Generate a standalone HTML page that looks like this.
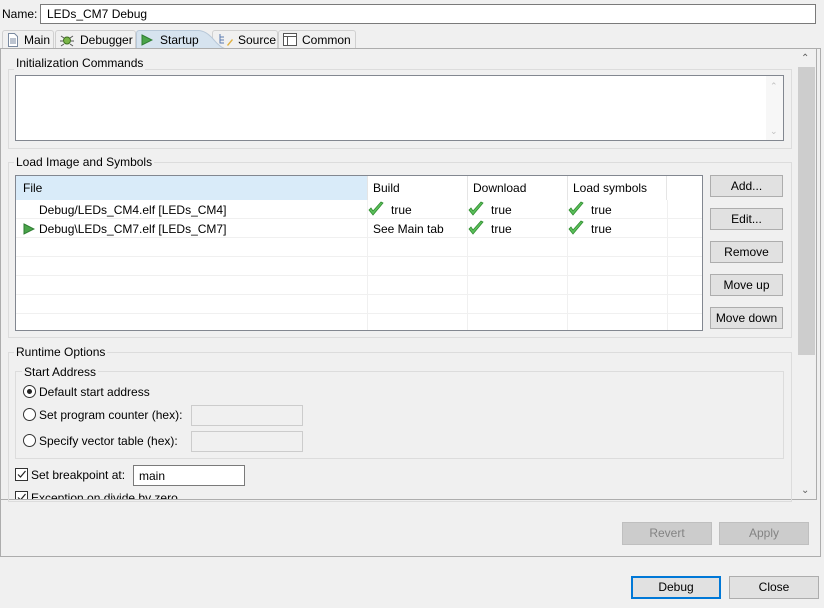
<!DOCTYPE html>
<html><head><style>
*{box-sizing:border-box;margin:0;padding:0}
body{width:824px;height:608px;background:#f0f0f0;font-family:"Liberation Sans",sans-serif;font-size:12px;color:#000;position:relative;overflow:hidden}
.a{position:absolute}
.t{position:absolute;white-space:nowrap;line-height:14px}
.grp{position:absolute;border:1px solid #dcdcdc}
.lbl{position:absolute;background:#f0f0f0;padding:0 2px;line-height:14px;white-space:nowrap}
.btn{position:absolute;background:#e1e1e1;border:1px solid #adadad;text-align:center;line-height:20px;height:22px}
.in{position:absolute;background:#fff;border:1px solid #7a7a7a}
.dis{position:absolute;background:#f0f0f0;border:1px solid #ccc}
.radio{position:absolute;width:13px;height:13px;border:1px solid #333;border-radius:50%;background:#fff}
.cb{position:absolute;width:13px;height:13px;border:1px solid #333;background:#fff}
.hl{position:absolute;height:1px;background:#f0f0f0}
.vl{position:absolute;width:1px;background:#f0f0f0}
</style></head><body>
<div class="t" style="left:2px;top:7px">Name:</div>
<div class="in" style="left:40px;top:4px;width:776px;height:20px"></div>
<div class="t" style="left:47px;top:7px">LEDs_CM7 Debug</div>

<!-- tabs -->
<div class="a" style="left:2px;top:30px;width:52px;height:19px;border:1px solid #d0d0d0;border-bottom:none;border-radius:3px 3px 0 0"></div>
<div class="a" style="left:55px;top:30px;width:81px;height:19px;border:1px solid #d0d0d0;border-bottom:none;border-radius:3px 3px 0 0"></div>
<div class="a" style="left:212px;top:30px;width:66px;height:19px;border:1px solid #d0d0d0;border-bottom:none;border-radius:3px 3px 0 0"></div>
<div class="a" style="left:278px;top:30px;width:78px;height:19px;border:1px solid #d0d0d0;border-bottom:none;border-radius:3px 3px 0 0"></div>
<svg class="a" style="left:136px;top:30px" width="92" height="19"><path d="M0.5 19V3.5Q0.5 0.5 3.5 0.5H62Q70 0.5 78 10T92 19Z" fill="#d6e3ef" stroke="#b8c8d8"/></svg>
<svg class="a" style="left:7px;top:33px" width="12" height="14"><path d="M1.5 .5h6l3 3v10h-9z" fill="#fff" stroke="#7a8aa0"/><path d="M3 6h6M3 8h6M3 10h6" stroke="#7a8aa0"/></svg>
<div class="t" style="left:24px;top:33px">Main</div>
<svg class="a" style="left:60px;top:33px" width="14" height="14"><circle cx="7" cy="7.5" r="3.5" fill="#7ab648" stroke="#3d6e20"/><path d="M1 3l3 2M13 3l-3 2M0 8h3M11 8h3M1 13l3-2M13 13l-3-2" stroke="#555"/></svg>
<div class="t" style="left:80px;top:33px">Debugger</div>
<svg class="a" style="left:141px;top:34px" width="12" height="12"><path d="M1 1l10 5-10 5z" fill="#4aa44a" stroke="#2e7d32"/></svg>
<div class="t" style="left:160px;top:33px">Startup</div>
<svg class="a" style="left:218px;top:33px" width="16" height="14"><path d="M2 1v9h4M2 4h4M2 7h4" stroke="#5a7ab0" fill="none"/><path d="M9 12l5-6 1 1-5 6z" fill="#e0b040"/></svg>
<div class="t" style="left:238px;top:33px">Source</div>
<svg class="a" style="left:283px;top:33px" width="14" height="13"><rect x=".5" y=".5" width="13" height="12" fill="#fff" stroke="#555"/><path d="M.5 3.5h13M4.5 3.5v9" stroke="#555"/></svg>
<div class="t" style="left:302px;top:33px">Common</div>

<!-- tab panel -->
<div class="a" style="left:0px;top:48px;width:821px;height:509px;border:1px solid #adadad"></div>
<div class="a" style="left:1px;top:49px;width:816px;height:451px;border-bottom:1px solid #adadad;border-right:1px solid #adadad"></div>
<div class="a" style="left:797px;top:50px;width:18px;height:449px;background:#f0f0f0"></div>
<div class="a" style="left:798px;top:67px;width:17px;height:288px;background:#cdcdcd"></div>
<div class="t" style="left:801px;top:52px;font-size:10px;color:#606060">&#8963;</div>
<div class="t" style="left:801px;top:484px;font-size:10px;color:#606060">&#8964;</div>

<!-- Init commands -->
<div class="grp" style="left:8px;top:69px;width:784px;height:80px"></div>
<div class="lbl" style="left:14px;top:56px">Initialization Commands</div>
<div class="in" style="left:15px;top:75px;width:769px;height:66px;border-color:#828790"></div>
<div class="a" style="left:766px;top:76px;width:17px;height:64px;background:#f7f7f7"></div>
<div class="t" style="left:770px;top:79px;font-size:9px;color:#c0c0c0">&#8963;</div>
<div class="t" style="left:770px;top:124px;font-size:9px;color:#c0c0c0">&#8964;</div>

<!-- Load Image -->
<div class="grp" style="left:8px;top:162px;width:784px;height:176px"></div>
<div class="lbl" style="left:14px;top:155px">Load Image and Symbols</div>
<div class="in" style="left:15px;top:175px;width:688px;height:156px;border-color:#828790"></div>
<div class="a" style="left:16px;top:176px;width:351px;height:24px;background:#d9ebf9"></div>
<div class="a" style="left:367px;top:176px;width:1px;height:24px;background:#e5e5e5"></div>
<div class="a" style="left:467px;top:176px;width:1px;height:24px;background:#e5e5e5"></div>
<div class="a" style="left:567px;top:176px;width:1px;height:24px;background:#e5e5e5"></div>
<div class="a" style="left:666px;top:176px;width:1px;height:24px;background:#e5e5e5"></div>
<div class="vl" style="left:367px;top:200px;height:130px"></div>
<div class="vl" style="left:467px;top:200px;height:130px"></div>
<div class="vl" style="left:567px;top:200px;height:130px"></div>
<div class="vl" style="left:667px;top:200px;height:130px"></div>
<div class="hl" style="left:16px;top:218px;width:686px"></div>
<div class="hl" style="left:16px;top:237px;width:686px"></div>
<div class="hl" style="left:16px;top:256px;width:686px"></div>
<div class="hl" style="left:16px;top:275px;width:686px"></div>
<div class="hl" style="left:16px;top:294px;width:686px"></div>
<div class="hl" style="left:16px;top:313px;width:686px"></div>
<div class="t" style="left:23px;top:181px">File</div>
<div class="t" style="left:373px;top:181px">Build</div>
<div class="t" style="left:473px;top:181px">Download</div>
<div class="t" style="left:573px;top:181px">Load symbols</div>
<div class="t" style="left:39px;top:203px">Debug/LEDs_CM4.elf [LEDs_CM4]</div>
<svg class="a" style="left:23px;top:223px" width="12" height="12"><path d="M1 1l10 5-10 5z" fill="#4aa44a" stroke="#2e7d32"/></svg>
<div class="t" style="left:39px;top:222px">Debug\LEDs_CM7.elf [LEDs_CM7]</div>
<svg class="a" style="left:367px;top:201px" width="18" height="16"><path d="M2 9l4 5 10-12-2-1-8 9-2-3z" fill="#5cc05c" stroke="#2e8b2e" stroke-width=".8"/></svg>
<div class="t" style="left:391px;top:203px">true</div>
<div class="t" style="left:373px;top:222px">See Main tab</div>
<svg class="a" style="left:467px;top:201px" width="18" height="16"><path d="M2 9l4 5 10-12-2-1-8 9-2-3z" fill="#5cc05c" stroke="#2e8b2e" stroke-width=".8"/></svg>
<div class="t" style="left:491px;top:203px">true</div>
<svg class="a" style="left:467px;top:220px" width="18" height="16"><path d="M2 9l4 5 10-12-2-1-8 9-2-3z" fill="#5cc05c" stroke="#2e8b2e" stroke-width=".8"/></svg>
<div class="t" style="left:491px;top:222px">true</div>
<svg class="a" style="left:567px;top:201px" width="18" height="16"><path d="M2 9l4 5 10-12-2-1-8 9-2-3z" fill="#5cc05c" stroke="#2e8b2e" stroke-width=".8"/></svg>
<div class="t" style="left:591px;top:203px">true</div>
<svg class="a" style="left:567px;top:220px" width="18" height="16"><path d="M2 9l4 5 10-12-2-1-8 9-2-3z" fill="#5cc05c" stroke="#2e8b2e" stroke-width=".8"/></svg>
<div class="t" style="left:591px;top:222px">true</div>

<div class="btn" style="left:710px;top:175px;width:73px">Add...</div>
<div class="btn" style="left:710px;top:208px;width:73px">Edit...</div>
<div class="btn" style="left:710px;top:241px;width:73px">Remove</div>
<div class="btn" style="left:710px;top:274px;width:73px">Move up</div>
<div class="btn" style="left:710px;top:307px;width:73px">Move down</div>

<!-- Runtime -->
<div class="grp" style="left:8px;top:352px;width:784px;height:150px"></div>
<div class="lbl" style="left:14px;top:345px">Runtime Options</div>
<div class="grp" style="left:15px;top:371px;width:769px;height:88px"></div>
<div class="lbl" style="left:22px;top:365px">Start Address</div>
<div class="radio" style="left:23px;top:385px"></div><div class="a" style="left:27px;top:389px;width:5px;height:5px;border-radius:50%;background:#222"></div>
<div class="t" style="left:39px;top:385px">Default start address</div>
<div class="radio" style="left:23px;top:408px"></div>
<div class="t" style="left:39px;top:408px">Set program counter (hex):</div>
<div class="dis" style="left:191px;top:405px;width:112px;height:21px"></div>
<div class="radio" style="left:23px;top:434px"></div>
<div class="t" style="left:39px;top:434px">Specify vector table (hex):</div>
<div class="dis" style="left:191px;top:431px;width:112px;height:21px"></div>
<div class="cb" style="left:15px;top:468px"></div>
<svg class="a" style="left:16px;top:469px" width="11" height="11"><path d="M2 5.5l2.5 2.5 5-6" stroke="#222" fill="none" stroke-width="1.2"/></svg>
<div class="t" style="left:31px;top:468px">Set breakpoint at:</div>
<div class="in" style="left:133px;top:465px;width:112px;height:21px"></div>
<div class="t" style="left:139px;top:469px">main</div>
<div class="a" style="left:0;top:490px;width:797px;height:9px;overflow:hidden">
<div class="cb" style="left:15px;top:1px"></div>
<svg class="a" style="left:16px;top:2px" width="11" height="11"><path d="M2 5.5l2.5 2.5 5-6" stroke="#222" fill="none" stroke-width="1.2"/></svg>
<div class="t" style="left:31px;top:1px">Exception on divide by zero</div>
</div>

<div class="btn" style="left:622px;top:522px;width:90px;height:23px;background:#cccccc;border-color:#bfbfbf;color:#838383">Revert</div>
<div class="btn" style="left:719px;top:522px;width:90px;height:23px;background:#cccccc;border-color:#bfbfbf;color:#838383">Apply</div>
<div class="btn" style="left:631px;top:576px;width:90px;height:23px;border:2px solid #0078d7;line-height:19px">Debug</div>
<div class="btn" style="left:729px;top:576px;width:90px;height:23px">Close</div>
</body></html>
